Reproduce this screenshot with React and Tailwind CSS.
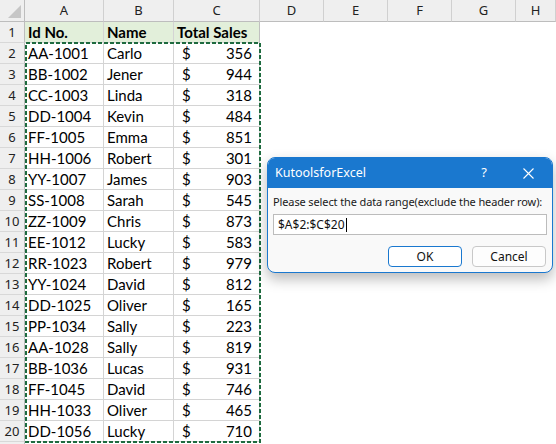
import React from 'react';

const rows = [
  ['AA-1001', 'Carlo', 356],
  ['BB-1002', 'Jener', 944],
  ['CC-1003', 'Linda', 318],
  ['DD-1004', 'Kevin', 484],
  ['FF-1005', 'Emma', 851],
  ['HH-1006', 'Robert', 301],
  ['YY-1007', 'James', 903],
  ['SS-1008', 'Sarah', 545],
  ['ZZ-1009', 'Chris', 873],
  ['EE-1012', 'Lucky', 583],
  ['RR-1023', 'Robert', 979],
  ['YY-1024', 'David', 812],
  ['DD-1025', 'Oliver', 165],
  ['PP-1034', 'Sally', 223],
  ['AA-1028', 'Sally', 819],
  ['BB-1036', 'Lucas', 931],
  ['FF-1045', 'David', 746],
  ['HH-1033', 'Oliver', 465],
  ['DD-1056', 'Lucky', 710],
];

const cols = ['A', 'B', 'C', 'D', 'E', 'F', 'G', 'H'];
const gridCols = 'grid grid-cols-[25px_79px_70px_86px_64px_64px_64px_64px_40px]';
const cell = "h-[21px] border-r border-b border-[#d4d4d4] text-[15px] leading-[20px] text-black font-['Lato',sans-serif] whitespace-nowrap overflow-hidden";
const rowNum = "h-[21px] bg-[#efefef] border-r border-b border-r-[#bdbdbd] border-b-[#d8d8d8] text-[13px] leading-[20px] text-[#222] text-center font-['Noto_Sans',sans-serif]";

function Blank() {
  return (
    <>
      <div className="h-[21px]" />
      <div className="h-[21px]" />
      <div className="h-[21px]" />
      <div className="h-[21px]" />
      <div className="h-[21px]" />
    </>
  );
}

function Sheet() {
  return (
    <div className="relative">
      <div className={gridCols}>
        <div className="h-[22px] bg-[#efefef] border-r border-b border-[#bdbdbd] relative">
          <div className="absolute right-[3px] bottom-[3px] w-0 h-0 border-l-[13px] border-l-transparent border-b-[13px] border-b-[#c6c6c6]" />
        </div>
        {cols.map((c) => (
          <div
            key={c}
            className="h-[22px] bg-[#efefef] border-r border-b border-r-[#d0d0d0] border-b-[#bdbdbd] text-center text-[13px] leading-[21px] text-[#222] font-['Noto_Sans',sans-serif]"
          >
            {c}
          </div>
        ))}

        <div className={rowNum}>1</div>
        <div className={cell + ' bg-[#e2efda] font-bold pl-[3px]'}>Id No.</div>
        <div className={cell + ' bg-[#e2efda] font-bold pl-[3px]'}>Name</div>
        <div className={cell + ' bg-[#e2efda] font-bold pl-[3px] border-r-[#c0c0c0]'}>Total Sales</div>
        <Blank />

        {rows.map((r, i) => (
          <React.Fragment key={i}>
            <div className={rowNum}>{i + 2}</div>
            <div className={cell + ' pl-[3px]'}>{r[0]}</div>
            <div className={cell + ' pl-[3px]'}>{r[1]}</div>
            <div className={cell + ' flex justify-between pl-[8px] pr-[7px]'}>
              <span>$</span>
              <span>{r[2]}</span>
            </div>
            <Blank />
          </React.Fragment>
        ))}

        <div className={rowNum} />
      </div>

      <svg className="absolute left-[25px] top-[42px]" width="236" height="401">
        <rect x="1" y="1" width="234" height="399" fill="none" stroke="#1e6b3f" strokeWidth="2" strokeDasharray="4 2" />
      </svg>
    </div>
  );
}

function Dialog() {
  return (
    <div className="absolute left-[267px] top-[157px] w-[286px] h-[116px] rounded-[8px] border border-[#1a78cf] bg-[#f9f9f9] shadow-[0_6px_14px_rgba(0,0,0,0.28)] overflow-hidden font-['Noto_Sans',sans-serif]">
      <div className="h-[30px] bg-[#1a78cf] flex items-center pl-[7px] text-white">
        <span className="text-[12.5px] flex-1">KutoolsforExcel</span>
        <span className="text-[13px] w-[24px] text-center">?</span>
        <svg className="mr-[18px] ml-[27px]" width="11" height="11" viewBox="0 0 11 11">
          <path d="M0.5 0.5L10.5 10.5M10.5 0.5L0.5 10.5" stroke="white" strokeWidth="1.1" />
        </svg>
      </div>
      <div className="px-[5px] pt-[7px]">
        <div className="text-[11px] leading-[14px] text-[#1a1a1a] whitespace-nowrap tracking-[-0.12px]">
          Please select the data range(exclude the header row):
        </div>
        <div className="mt-[5px] h-[21px] border border-[#bcbcbc] bg-white flex items-center pl-[4px] text-[12px] text-[#111]">
          $A$2:$C$20
          <span className="inline-block w-px h-[14px] bg-black ml-[1px]" />
        </div>
        <div className="mt-[11px] flex justify-end gap-[10px] pr-[1px]">
          <button className="w-[74px] h-[21px] rounded-[4px] border border-[#1a78cf] bg-white text-[12px] text-[#111]">OK</button>
          <button className="w-[74px] h-[21px] rounded-[4px] border border-[#c8c8c8] bg-[#fdfdfd] text-[12px] text-[#111]">Cancel</button>
        </div>
      </div>
    </div>
  );
}

export default function App() {
  return (
    <div className="relative w-[556px] h-[444px] overflow-hidden bg-white">
      <Sheet />
      <Dialog />
    </div>
  );
}
